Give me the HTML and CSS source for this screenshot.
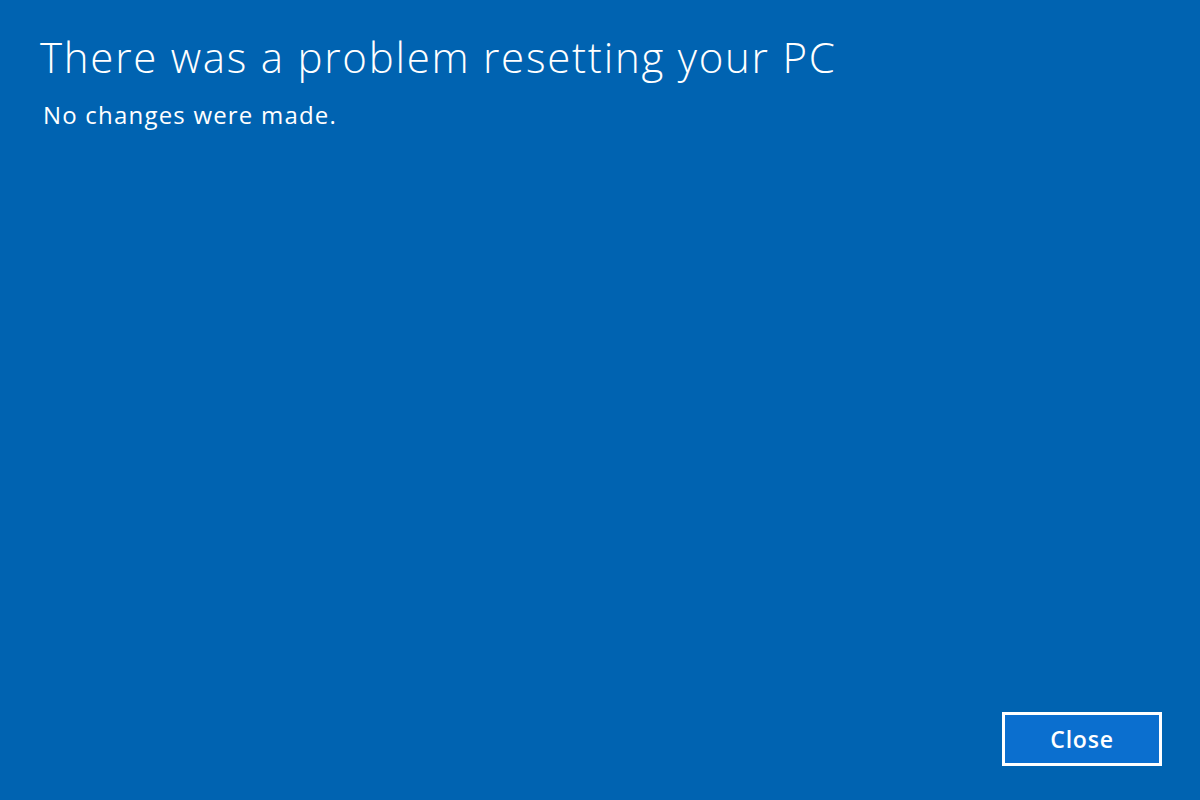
FILE: index.html
```html
<!DOCTYPE html>
<html lang="en">
<head>
    <meta charset="UTF-8">
    <title>Reset this PC</title>
    <link rel="stylesheet" href="styles.css">
</head>
<body>
    <div class="screen">
        <div class="message">
            <h1>There was a problem resetting your PC</h1>
            <p class="detail">No changes were made.</p>
        </div>
        <div class="actions">
            <button class="close-button">Close</button>
        </div>
    </div>
</body>
</html>
```

FILE: styles.css
```css
body {
    margin: 0;
    background-color: #0063b1;
    font-family: "Open Sans", "Noto Sans", sans-serif;
    color: #ffffff;
}

.screen {
    height: 800px;
    box-sizing: border-box;
    padding: 27px 38px 34px 40px;
    display: flex;
    flex-direction: column;
    justify-content: space-between;
}

h1 {
    margin: 0;
    font-size: 42px;
    font-weight: 300;
    line-height: 60px;
    letter-spacing: 1.75px;
}

.detail {
    margin: 11px 0 0 3px;
    font-size: 24px;
    font-weight: 400;
    letter-spacing: 1.2px;
}

.actions {
    display: flex;
    justify-content: flex-end;
}

.close-button {
    width: 160px;
    height: 54px;
    background-color: #0b6fcf;
    border: 3px solid #ffffff;
    color: #ffffff;
    font-family: "Open Sans", "Noto Sans", sans-serif;
    font-size: 23px;
    font-weight: 600;
    letter-spacing: 0.8px;
}
```
